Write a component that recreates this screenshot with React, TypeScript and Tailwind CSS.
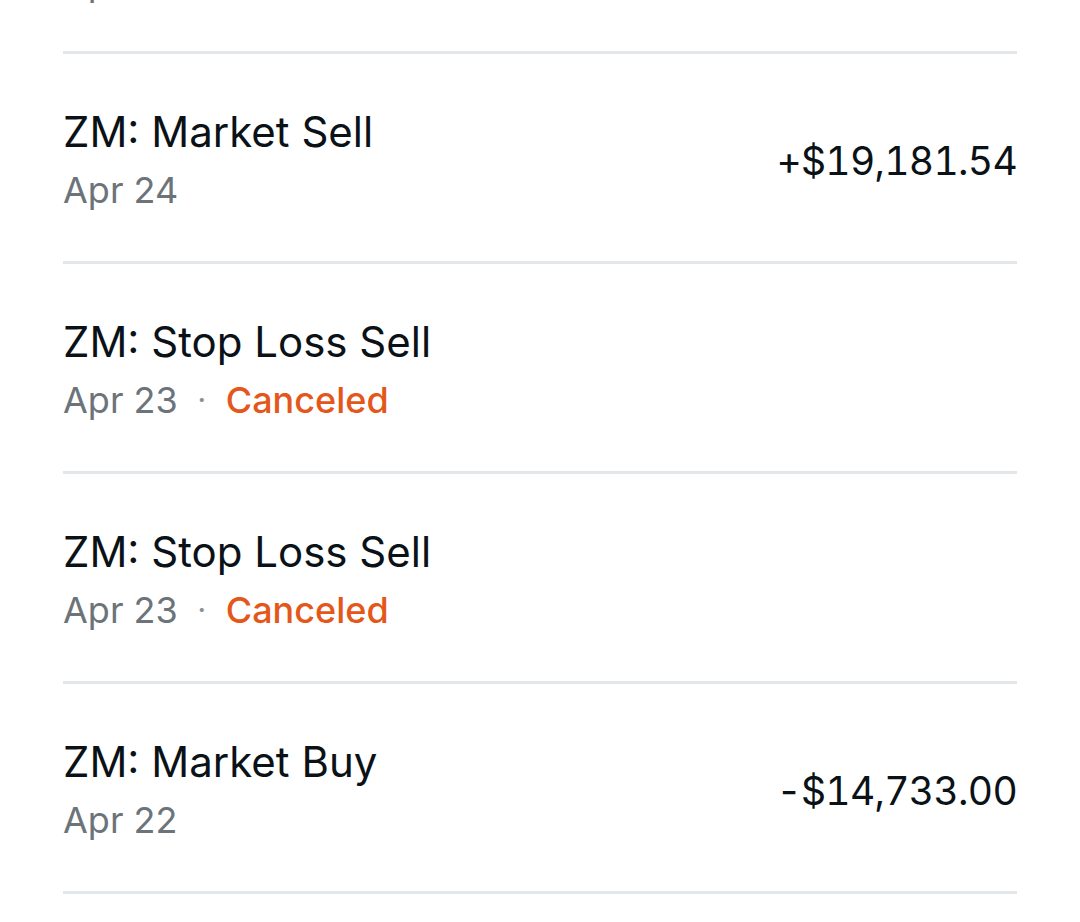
const rows = [
  { title: "ZM: Market Sell", date: "Apr 24", amount: "+$19,181.54", status: "" },
  { title: "ZM: Market Sell", date: "Apr 24", amount: "+$19,181.54", status: "" },
  { title: "ZM: Stop Loss Sell", date: "Apr 23", amount: "", status: "Canceled" },
  { title: "ZM: Stop Loss Sell", date: "Apr 23", amount: "", status: "Canceled" },
  { title: "ZM: Market Buy", date: "Apr 22", amount: "-$14,733.00", status: "" },
];

function OrderRow({
  title,
  date,
  amount,
  status,
  peek,
}: (typeof rows)[number] & { peek?: boolean }) {
  return (
    <div className="flex h-[210px] items-center justify-between border-b-[3px] border-[#e3e7ea]">
      <div className={`flex flex-col ${peek ? "pt-[13px]" : "pt-[6px]"}`}>
        <span className="text-[42px] leading-[56px] text-[#0b1217]">{title}</span>
        <div className="mt-[2px] flex items-center text-[36px] leading-[56px]">
          <span className="text-[#6c747a]">{date}</span>
          {status && (
            <>
              <span className="mx-[20px] text-[24px] font-bold text-[#8a9196]">·</span>
              <span className="font-medium text-[#e4571b]">{status}</span>
            </>
          )}
        </div>
      </div>
      {amount && (
        <span className="pt-[7px] text-[39px] leading-[48px] tracking-[-0.7px] tabular-nums text-[#0b1217]">
          {amount}
        </span>
      )}
    </div>
  );
}

export default function App() {
  return (
    <div className="h-[922px] w-[1080px] overflow-hidden bg-white font-['Inter',sans-serif]">
      <div className="-mt-[156px] px-[63px]">
        {rows.map((row, i) => (
          <OrderRow key={i} {...row} peek={i === 0} />
        ))}
      </div>
    </div>
  );
}
